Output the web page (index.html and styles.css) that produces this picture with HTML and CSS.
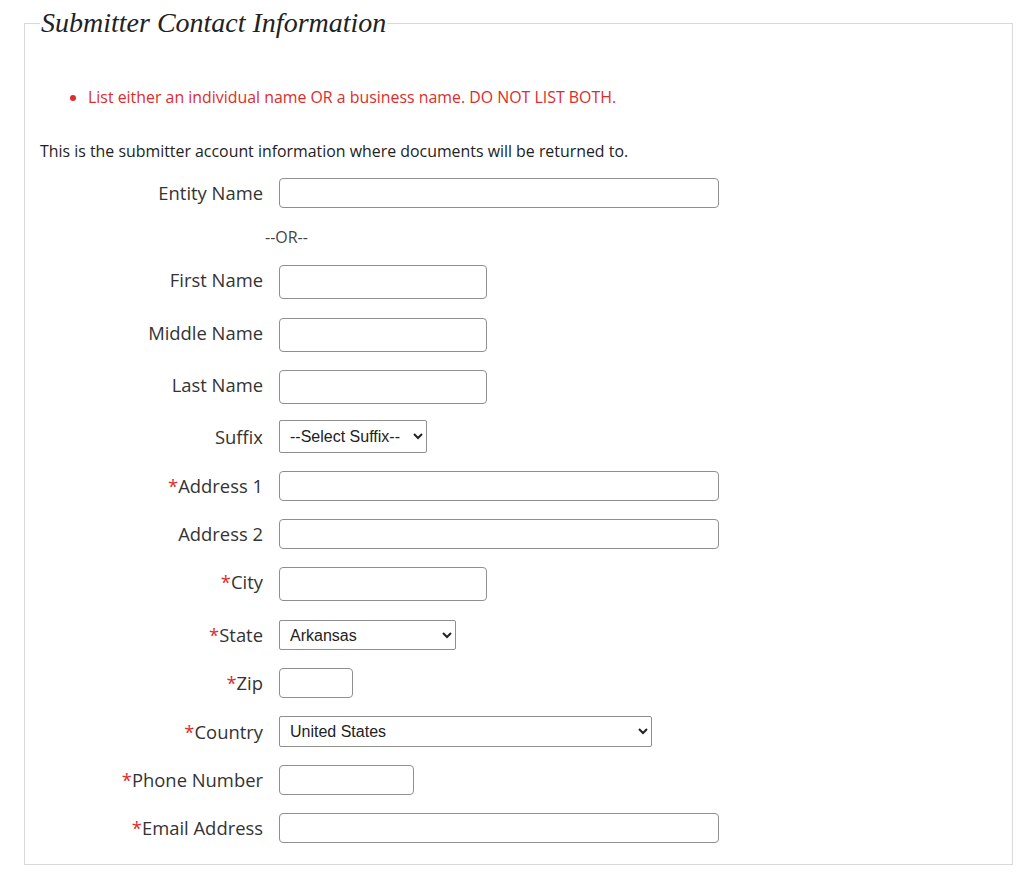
FILE: index.html
```html
<!DOCTYPE html>
<html lang="en">
<head>
<meta charset="utf-8">
<title>Submitter Contact Information</title>
<link rel="stylesheet" href="styles.css">
</head>
<body>
<div class="page">
  <fieldset class="box">
    <legend class="box-title">Submitter Contact Information</legend>
    <ul class="notice">
      <li>List either an individual name OR a business name. DO NOT LIST BOTH.</li>
    </ul>
    <p class="intro">This is the submitter account information where documents will be returned to.</p>
    <div class="form">
      <div class="row h30">
        <label class="lbl">Entity Name</label>
        <input class="inp w-lg" type="text">
      </div>
      <div class="row or-row">
        <span class="or">--OR--</span>
      </div>
      <div class="row h34">
        <label class="lbl">First Name</label>
        <input class="inp w-md" type="text">
      </div>
      <div class="row h34 nudge">
        <label class="lbl">Middle Name</label>
        <input class="inp w-md" type="text">
      </div>
      <div class="row h34">
        <label class="lbl">Last Name</label>
        <input class="inp w-md" type="text">
      </div>
      <div class="row h33 tight">
        <label class="lbl">Suffix</label>
        <select class="sel w-suffix"><option>--Select Suffix--</option></select>
      </div>
      <div class="row h30">
        <label class="lbl"><span class="req">*</span>Address 1</label>
        <input class="inp w-lg" type="text">
      </div>
      <div class="row h30">
        <label class="lbl">Address 2</label>
        <input class="inp w-lg" type="text">
      </div>
      <div class="row h34">
        <label class="lbl"><span class="req">*</span>City</label>
        <input class="inp w-md" type="text">
      </div>
      <div class="row h30 nudge">
        <label class="lbl"><span class="req">*</span>State</label>
        <select class="sel w-state"><option>Arkansas</option></select>
      </div>
      <div class="row h30">
        <label class="lbl"><span class="req">*</span>Zip</label>
        <input class="inp w-xs" type="text">
      </div>
      <div class="row h31">
        <label class="lbl"><span class="req">*</span>Country</label>
        <select class="sel w-country"><option>United States</option></select>
      </div>
      <div class="row h30">
        <label class="lbl"><span class="req">*</span>Phone Number</label>
        <input class="inp w-sm" type="text">
      </div>
      <div class="row h30">
        <label class="lbl"><span class="req">*</span>Email Address</label>
        <input class="inp w-lg" type="text">
      </div>
    </div>
  </fieldset>
</div>
</body>
</html>
```
FILE: styles.css
```css
html, body {
  margin: 0;
  padding: 0;
  background: #ffffff;
}
body {
  font-family: "Open Sans", "Liberation Sans", sans-serif;
  color: #222222;
}
.page {
  padding: 9px 11px 0 24px;
}
.box {
  margin: 0;
  padding: 0 15px 21px 15px;
  border: 1px solid #d9d9d9;
  min-width: 0;
}
.box-title {
  padding: 0 1px;
  font-family: "Liberation Serif", "Times New Roman", serif;
  font-style: italic;
  font-size: 28px;
  line-height: 28px;
  color: #222222;
}
.notice {
  margin: 50px 0 0 0;
  padding-left: 48px;
  color: #dd2c2c;
  font-size: 15.9px;
  line-height: 20px;
}
.intro {
  margin: 34px 0 0 0;
  font-size: 15.9px;
  line-height: 20px;
  color: #222222;
}
.form {
  margin-top: 17px;
  display: flex;
  flex-direction: column;
  gap: 18px;
}
.row {
  display: flex;
  align-items: center;
  gap: 16px;
}
.lbl {
  width: 223px;
  flex: none;
  text-align: right;
  font-size: 18.4px;
  line-height: 24px;
  color: #333333;
}
.h34 .lbl {
  margin-bottom: 5px;
}
.req {
  color: #dd2c2c;
}
.or-row {
  height: 20px;
  margin-top: 1px;
  padding-left: 225px;
}
.or {
  font-size: 16px;
  line-height: 20px;
  color: #444444;
}
.nudge { margin-top: 1px; }
.tight { margin-top: -2px; }
.h30 { height: 30px; }
.h31 { height: 31px; }
.h33 { height: 33px; }
.h34 { height: 34px; }
.inp {
  box-sizing: border-box;
  height: 100%;
  margin: 0;
  padding: 2px 6px;
  border: 1px solid #8f8f8f;
  border-radius: 4px;
  background: #ffffff;
  font-family: "Liberation Sans", Arial, sans-serif;
  font-size: 14px;
}
.sel {
  box-sizing: border-box;
  height: 100%;
  margin: 0;
  padding: 0 4px 0 6px;
  border: 1px solid #8f8f8f;
  border-radius: 2px;
  background-color: #ffffff;
  font-family: "Liberation Sans", Arial, sans-serif;
  font-size: 16px;
  color: #222222;
}
.w-lg { width: 440px; }
.w-md { width: 208px; }
.w-sm { width: 135px; }
.w-xs { width: 74px; }
.w-suffix { width: 148px; }
.w-state { width: 177px; }
.w-country { width: 373px; }
```
